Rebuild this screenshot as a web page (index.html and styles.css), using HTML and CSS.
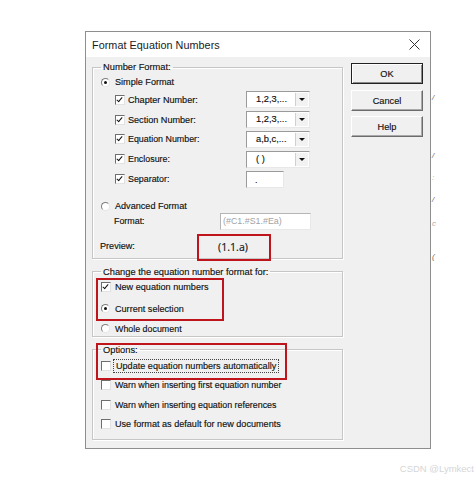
FILE: index.html
```html
<!DOCTYPE html>
<html>
<head>
<meta charset="utf-8">
<title>Format Equation Numbers</title>
<link rel="stylesheet" href="styles.css">
</head>
<body>
<div class="page">
  <div class="dialog">
    <div class="titlebar">
      <span class="title">Format Equation Numbers</span>
      <svg class="close" width="11" height="11" viewBox="0 0 11 11"><path d="M0.5 0.5 L10.5 10.5 M10.5 0.5 L0.5 10.5" stroke="#333" stroke-width="1" fill="none"/></svg>
    </div>
    <div class="dbody">
      <div class="main">
        <fieldset class="group g1">
          <legend>Number Format:</legend>
          <div class="row simple">
            <span class="radio on"></span><span class="lbl">Simple Format</span>
          </div>
          <div class="row opt">
            <span class="check on"></span><span class="lbl grow">Chapter Number:</span>
            <span class="combo"><span class="val">1,2,3,...</span><span class="arrow"></span></span>
          </div>
          <div class="row opt">
            <span class="check on"></span><span class="lbl grow">Section Number:</span>
            <span class="combo"><span class="val">1,2,3,...</span><span class="arrow"></span></span>
          </div>
          <div class="row opt">
            <span class="check on"></span><span class="lbl grow small">Equation Number:</span>
            <span class="combo"><span class="val">a,b,c,...</span><span class="arrow"></span></span>
          </div>
          <div class="row opt">
            <span class="check on"></span><span class="lbl grow small">Enclosure:</span>
            <span class="combo"><span class="val">( )</span><span class="arrow"></span></span>
          </div>
          <div class="row opt">
            <span class="check on"></span><span class="lbl grow small">Separator:</span>
            <span class="combo-slot"><span class="textbox">.</span></span>
          </div>
          <div class="row adv">
            <span class="radio"></span><span class="lbl">Advanced Format</span>
          </div>
          <div class="row fmt">
            <span class="lbl small fmtlbl">Format:</span>
            <span class="fmtbox">(#C1.#S1.#Ea)</span>
          </div>
          <div class="row preview">
            <span class="lbl prevlbl">Preview:</span>
            <span class="prevval">(1.1.a)</span>
          </div>
        </fieldset>

        <fieldset class="group g2">
          <legend>Change the equation number format for:</legend>
          <div class="row r1"><span class="check on"></span><span class="lbl">New equation numbers</span></div>
          <div class="row r2"><span class="radio on"></span><span class="lbl">Current selection</span></div>
          <div class="row r3"><span class="radio"></span><span class="lbl small">Whole document</span></div>
        </fieldset>

        <fieldset class="group g3">
          <legend>Options:</legend>
          <div class="row o1"><span class="check"></span><span class="lbl focus">Update equation numbers automatically</span></div>
          <div class="row o2"><span class="check"></span><span class="lbl small">Warn when inserting first equation number</span></div>
          <div class="row o3"><span class="check"></span><span class="lbl small">Warn when inserting equation references</span></div>
          <div class="row o4"><span class="check"></span><span class="lbl">Use format as default for new documents</span></div>
        </fieldset>
      </div>
      <div class="buttons">
        <div class="btn default">OK</div>
        <div class="btn">Cancel</div>
        <div class="btn">Help</div>
      </div>
    </div>
    <div class="mark m1"></div>
    <div class="mark m2"></div>
    <div class="mark m3"></div>
  </div>
  <div class="edge">
    <span class="e1">/</span>
    <span class="e2">/</span>
    <span class="e3">:</span>
    <span class="e4">/</span>
    <span class="e5">c</span>
    <span class="e6">(</span>
  </div>
</div>
<div class="watermark">CSDN @Lymkect</div>
</body>
</html>
```

FILE: styles.css
```css
html, body {
  margin: 0;
  padding: 0;
  background: #ffffff;
}
body {
  width: 474px;
  height: 477px;
  overflow: hidden;
  font-family: "Liberation Sans", Arial, sans-serif;
  color: #111111;
}
.page {
  display: flex;
  padding: 31px 0 0 85px;
}
.dialog {
  position: relative;
  width: 346px;
  height: 418px;
  box-sizing: border-box;
  border: 1px solid #8e8e8e;
  background: #f0f0f0;
  display: flex;
  flex-direction: column;
  -webkit-text-stroke: 0.15px currentColor;
}
.titlebar {
  height: 25px;
  flex: none;
  background: #ffffff;
  display: flex;
  align-items: center;
  justify-content: space-between;
  padding: 0 10px 0 6px;
}
.title {
  font-size: 10.8px;
  color: #1a1a1a;
  letter-spacing: 0.05px;
  -webkit-text-stroke: 0;
}
.close { display: block; }
.dbody {
  flex: 1;
  display: flex;
  gap: 8px;
  padding: 3px 7px 0 6px;
}
.main {
  width: 251px;
  display: flex;
  flex-direction: column;
}
.group {
  margin: 0;
  padding: 0 0 0 8px;
  border: 1px solid #c6c6c6;
  box-shadow: inset 1px 1px 0 #ffffff, 1px 1px 0 #ffffff;
  min-width: 0;
}
.group legend {
  margin-left: 0;
  padding: 0 2px;
  font-size: 9.3px;
  line-height: 14px;
  height: 14px;
}
.g2 { margin-top: 6px; }
.g3 { margin-top: 6px; padding-bottom: 8px; }

.row {
  display: flex;
  align-items: center;
  font-size: 9.1px;
}
.lbl { white-space: nowrap; }
.grow { flex: 1; }
.small { font-size: 8.9px; }

.simple { height: 16px; }
.opt { height: 19.8px; padding-left: 14px; }
.adv { height: 13px; margin-top: 11px; }
.fmt { height: 17px; padding-left: 13px; }
.fmtlbl { width: 106px; }
.preview { height: 20px; margin-top: 6px; padding-bottom: 2px; }
.prevlbl { width: 96px; margin-left: -1px; }
.prevval {
  width: 74px;
  text-align: center;
  font-size: 10.6px;
  font-family: "Open Sans", "Liberation Sans", sans-serif;
  margin-top: 2px;
}

.g2 .r1 { height: 14px; margin-top: 1px; }
.g2 .r2 { height: 14px; margin-top: 8px; }
.g2 .r3 { height: 14px; margin-top: 6px; }

.g3 .o1 { height: 14px; margin-top: 2px; }
.g3 .o2 { height: 14px; margin-top: 5px; }
.g3 .o3 { height: 14px; margin-top: 6px; }
.g3 .o4 { height: 14px; margin-top: 5px; }

.radio {
  width: 9px;
  height: 9px;
  box-sizing: border-box;
  border-radius: 50%;
  border: 1px solid;
  border-color: #7d7d7d #e6e6e6 #e6e6e6 #7d7d7d;
  background: #ffffff;
  margin-right: 5px;
  position: relative;
  flex: none;
}
.radio.on::after {
  content: "";
  position: absolute;
  left: 2px;
  top: 2px;
  width: 3px;
  height: 3px;
  border-radius: 50%;
  background: #111;
}
.check {
  width: 10px;
  height: 10px;
  box-sizing: border-box;
  border: 1px solid;
  border-color: #6e6e6e #e2e2e2 #e2e2e2 #6e6e6e;
  background: #ffffff;
  margin-right: 3px;
  position: relative;
  flex: none;
}
.check.on::after {
  content: "";
  position: absolute;
  left: 2px;
  top: 0px;
  width: 2px;
  height: 5px;
  border: solid #111;
  border-width: 0 1.5px 1.5px 0;
  transform: rotate(40deg);
}
.g2 .check, .g3 .check { margin-right: 4px; }
.g2 .radio, .g3 .radio { margin-right: 5px; }

.combo, .combo-slot {
  width: 64px;
  height: 17px;
  margin-right: 32px;
  flex: none;
  display: flex;
}
.combo {
  box-sizing: border-box;
  border: 1px solid;
  border-color: #9a9a9a #e8e8e8 #e8e8e8 #9a9a9a;
  background: #ffffff;
}
.combo .val {
  flex: 1;
  padding-left: 9px;
  font-size: 9.3px;
  line-height: 15px;
}
.combo .arrow {
  width: 12px;
  margin: 1px 1px 1px 0;
  background: #f2f2f2;
  border-left: 1px solid #d0d0d0;
  position: relative;
}
.combo .arrow::after {
  content: "";
  position: absolute;
  left: 3px;
  top: 5px;
  border-left: 3px solid transparent;
  border-right: 3px solid transparent;
  border-top: 3px solid #111;
}
.textbox {
  width: 38px;
  height: 17px;
  box-sizing: border-box;
  border: 1px solid;
  border-color: #9a9a9a #e8e8e8 #e8e8e8 #9a9a9a;
  background: #ffffff;
  padding-left: 8px;
  font-size: 9px;
  line-height: 17px;
}
.fmtbox {
  width: 91px;
  height: 17px;
  box-sizing: border-box;
  border: 1px solid;
  border-color: #b5b5b5 #e8e8e8 #e8e8e8 #b5b5b5;
  background: #ffffff;
  color: #a3a3a3;
  font-size: 8.9px;
  line-height: 15px;
  padding-left: 2px;
  -webkit-text-stroke: 0;
}
.focus {
  outline: 1px dotted #444;
  outline-offset: 1px;
  padding: 0 1px;
}

.buttons {
  width: 72px;
  display: flex;
  flex-direction: column;
  gap: 5px;
  padding-top: 3px;
}
.btn {
  height: 21px;
  box-sizing: border-box;
  border: 1px solid;
  border-color: #ffffff #6c6c6c #6c6c6c #ffffff;
  box-shadow: inset -1px -1px 0 #a9a9a9;
  background: #f0f0f0;
  display: flex;
  align-items: center;
  justify-content: center;
  font-size: 9.2px;
}
.btn.default {
  border: 1px solid #222;
  box-shadow: inset 1px 1px 0 #ffffff, inset -1px -1px 0 #8a8a8a;
  margin-bottom: 1px;
}

.mark { position: absolute; border: 2px solid #c0141c; box-sizing: border-box; }
.m1 { left: 111px; top: 202px; width: 74px; height: 27px; }
.m2 { left: 10px; top: 246px; width: 128px; height: 43px; }
.m3 { left: 10px; top: 311px; width: 191px; height: 37px; }

.edge {
  width: 8px;
  position: relative;
  font-size: 8px;
  color: #666;
  font-style: italic;
}
.edge span { position: absolute; left: 1px; }
.e1 { top: 62px; }
.e2 { top: 120px; }
.e3 { top: 142px; color: #aaa; }
.e4 { top: 164px; }
.e5 { top: 188px; color: #aaa; }
.e6 { top: 221px; }

.watermark {
  position: absolute;
  right: 0;
  top: 463px;
  font-size: 9.5px;
  color: #d6d6d6;
  white-space: nowrap;
}
```
